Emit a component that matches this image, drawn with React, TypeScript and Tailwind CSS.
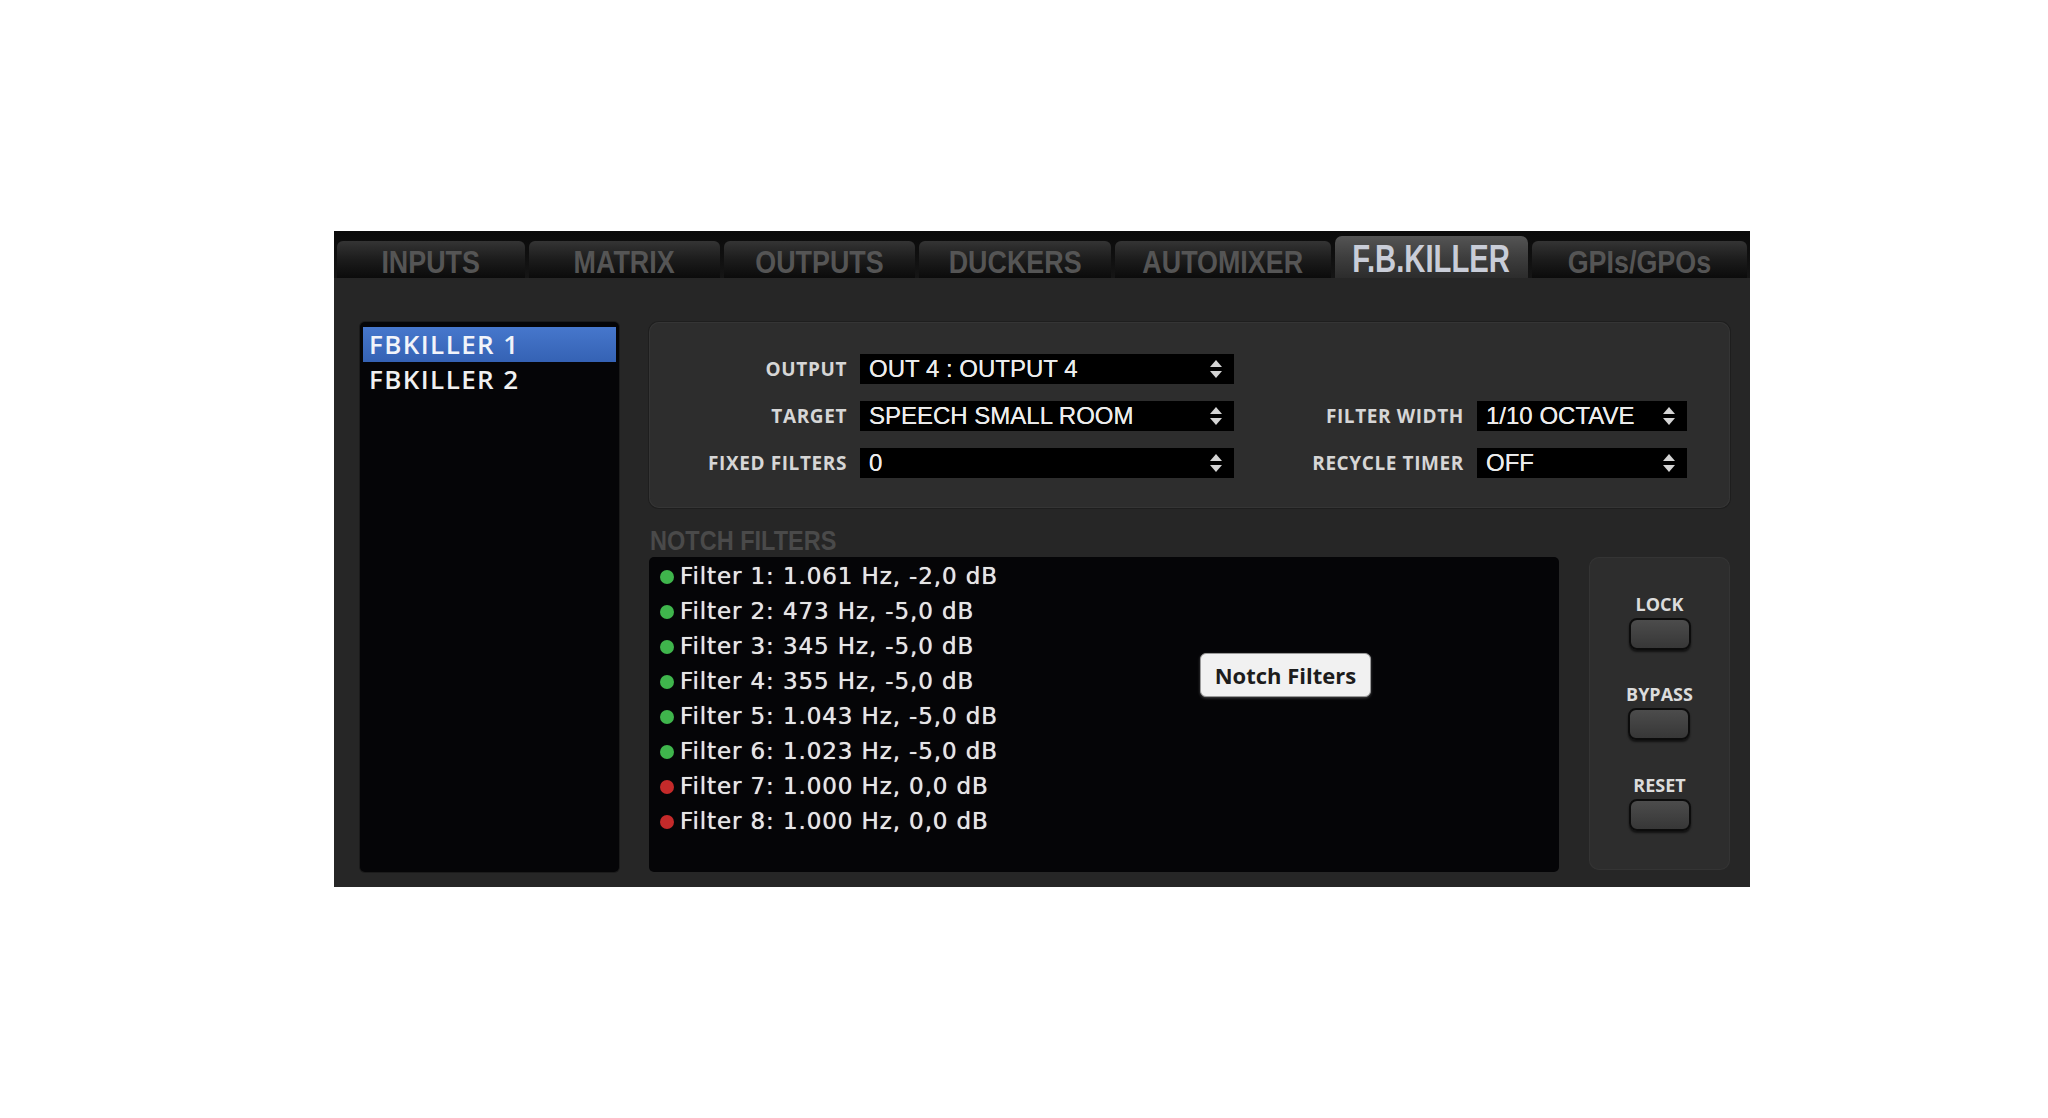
import React from "react";

const tabs = [
  { name: "INPUTS", w: "w-[188px]" },
  { name: "MATRIX", w: "w-[191px]" },
  { name: "OUTPUTS", w: "w-[191px]" },
  { name: "DUCKERS", w: "w-[192px]" },
  { name: "AUTOMIXER", w: "w-[216px]" },
  { name: "F.B.KILLER", w: "w-[193px]", active: true },
  { name: "GPIs/GPOs", w: "w-[215px]" },
];

const filters = [
  { t: "Filter 1: 1.061 Hz, -2,0 dB", on: true },
  { t: "Filter 2: 473 Hz, -5,0 dB", on: true },
  { t: "Filter 3: 345 Hz, -5,0 dB", on: true },
  { t: "Filter 4: 355 Hz, -5,0 dB", on: true },
  { t: "Filter 5: 1.043 Hz, -5,0 dB", on: true },
  { t: "Filter 6: 1.023 Hz, -5,0 dB", on: true },
  { t: "Filter 7: 1.000 Hz, 0,0 dB", on: false },
  { t: "Filter 8: 1.000 Hz, 0,0 dB", on: false },
];

function Arrows() {
  return (
    <svg width="12" height="18" viewBox="0 0 12 18" className="shrink-0">
      <path d="M6 0 L12 7 L0 7 Z" fill="#d4d4d4" />
      <path d="M0 11 L12 11 L6 18 Z" fill="#d4d4d4" />
    </svg>
  );
}

function Label({ children }: { children: React.ReactNode }) {
  return (
    <div className="flex items-center justify-end h-[30px] text-[19px] font-bold tracking-[0.6px] text-[#d6d6d6] font-['Open_Sans',sans-serif] whitespace-nowrap">
      {children}
    </div>
  );
}

function Select({ value }: { value: string }) {
  return (
    <div className="flex items-center justify-between h-[30px] bg-black pl-[9px] pr-[12px] text-[24px] leading-none text-[#ececec] font-['Liberation_Sans',Arial,sans-serif] whitespace-nowrap [text-shadow:0_0_0.4px_#ececec]">
      <span>{value}</span>
      <Arrows />
    </div>
  );
}

function SideButton({ label, mt }: { label: string; mt: string }) {
  return (
    <div className={`flex flex-col items-center ${mt}`}>
      <div className="h-[18px] leading-[18px] text-[18px] font-bold text-[#dcdcdc] font-['Open_Sans',sans-serif]">
        {label}
      </div>
      <div className="mt-[5px] w-[62px] h-[32px] rounded-[8px] border-2 border-[#0c0c0c] bg-gradient-to-b from-[#4c4c4c] to-[#373737] shadow-[0_2px_2px_rgba(0,0,0,0.6)]" />
    </div>
  );
}

export default function App() {
  return (
    <div className="w-[2048px] h-[1118px] bg-white pt-[231px] pl-[334px]">
      <div className="w-[1416px] h-[656px] bg-[#262626] flex flex-col">
        {/* Tab bar */}
        <div className="h-[47px] bg-gradient-to-b from-[#0a0a0a] to-[#151515] flex items-end pl-[3px] gap-[4px]">
          {tabs.map((t) =>
            t.active ? (
              <div
                key={t.name}
                className={`${t.w} h-[42px] rounded-t-[7px] bg-gradient-to-b from-[#545454] via-[#3e3e3e] to-[#2c2c2c] flex items-center justify-center overflow-hidden`}
              >
                <span className="inline-block scale-x-[0.75] text-[39px] leading-none font-bold text-[#c9cdd8] font-['Liberation_Sans',Arial,sans-serif] whitespace-nowrap mt-[2px]">
                  {t.name}
                </span>
              </div>
            ) : (
              <div
                key={t.name}
                className={`${t.w} h-[37px] rounded-t-[6px] bg-gradient-to-b from-[#343434] via-[#1c1c1c] to-[#0b0b0b] flex items-center justify-center overflow-hidden`}
              >
                <span className="inline-block scale-x-[0.84] text-[32px] leading-none font-bold text-[#555555] font-['Liberation_Sans',Arial,sans-serif] whitespace-nowrap mt-[4px]">
                  {t.name}
                </span>
              </div>
            )
          )}
        </div>

        {/* Content */}
        <div className="flex flex-1 pl-[26px] pt-[44px] pb-[15px] gap-[30px]">
          {/* Left list */}
          <div className="w-[259px] h-[550px] bg-[#050507] rounded-[5px] px-[3px] pt-[5px] shadow-[0_0_0_1px_#1b1b1b]">
            <div className="h-[35px] flex items-center pl-[6px] bg-gradient-to-b from-[#4677cc] to-[#3562b4] text-[26px] font-semibold tracking-[1.4px] text-[#f2f4fa] font-['Open_Sans',sans-serif]">
              FBKILLER 1
            </div>
            <div className="h-[35px] flex items-center pl-[6px] text-[26px] font-semibold tracking-[1.4px] text-[#f0f0f0] font-['Open_Sans',sans-serif]">
              FBKILLER 2
            </div>
          </div>

          {/* Right column */}
          <div className="w-[1081px] flex flex-col">
            <div className="h-[186px] rounded-[10px] bg-[#2d2d2d] shadow-[inset_0_0_0_1px_#353535,0_0_0_1px_#1e1e1e] pt-[32px]">
              <div className="grid grid-cols-[198px_374px_217px_210px] gap-x-[13px] gap-y-[17px]">
                <Label>OUTPUT</Label>
                <Select value="OUT 4 : OUTPUT 4" />
                <div />
                <div />
                <Label>TARGET</Label>
                <Select value="SPEECH SMALL ROOM" />
                <Label>FILTER WIDTH</Label>
                <Select value="1/10 OCTAVE" />
                <Label>FIXED FILTERS</Label>
                <Select value="0" />
                <Label>RECYCLE TIMER</Label>
                <Select value="OFF" />
              </div>
            </div>

            <div className="h-[49px] pt-[19px] pl-[1px]">
              <span className="inline-block origin-left scale-x-[0.84] text-[28px] leading-[28px] font-bold text-[#4a4a4a] font-['Liberation_Sans',Arial,sans-serif] whitespace-nowrap">
                NOTCH FILTERS
              </span>
            </div>

            <div className="flex gap-[30px]">
              <div className="relative w-[910px] h-[315px] bg-[#050507] rounded-[5px] pt-[2px] pl-[11px]">
                {filters.map((f) => (
                  <div key={f.t} className="h-[35px] flex items-center gap-[6px]">
                    <span
                      className={`w-[14px] h-[14px] rounded-full ${
                        f.on ? "bg-[#3fb54c]" : "bg-[#c42a2a]"
                      }`}
                    />
                    <span className="text-[23px] tracking-[0.9px] text-[#e6e6e6] font-['DejaVu_Sans',sans-serif] whitespace-nowrap [text-shadow:0_0_0.7px_#e6e6e6]">
                      {f.t}
                    </span>
                  </div>
                ))}
                <div className="absolute left-[551px] top-[96px] w-[171px] h-[44px] rounded-[6px] bg-[#f1f1f1] border border-[#9a9a9a] shadow-[0_1px_3px_rgba(255,255,255,0.25)] flex items-center justify-center text-[22px] font-bold text-[#1c1c1c] font-['Open_Sans',sans-serif]">
                  Notch Filters
                </div>
              </div>

              <div className="w-[141px] h-[313px] rounded-[10px] bg-[#2d2d2d] shadow-[inset_0_0_0_1px_#343434] pt-[38px] flex flex-col items-center">
                <SideButton label="LOCK" mt="mt-0" />
                <SideButton label="BYPASS" mt="mt-[35px]" />
                <SideButton label="RESET" mt="mt-[36px]" />
              </div>
            </div>
          </div>
        </div>
      </div>
    </div>
  );
}
